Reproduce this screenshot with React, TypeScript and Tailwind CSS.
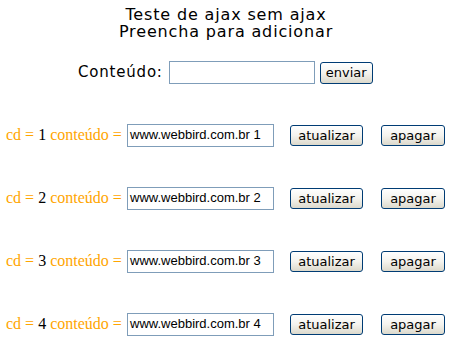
import React from "react";

const Btn = ({ children, w, h = "h-[21px]" }: { children: React.ReactNode; w: string; h?: string }) => (
  <button
    className={`${w} ${h} rounded-[3px] border border-[#003c74] bg-gradient-to-b from-[#ffffff] via-[#f4f3ee] to-[#dcd9cc] text-[13px] leading-none text-black [font-family:'DejaVu_Sans',Verdana,sans-serif] flex items-center justify-center`}
  >
    {children}
  </button>
);

const Row = ({ n }: { n: number }) => (
  <div className="flex items-center h-[24px]">
    <div className="w-[127px] pl-[6px] text-[16px] text-[#ffa500] [font-family:'Liberation_Serif','Times_New_Roman',serif] whitespace-nowrap">
      cd = <span className="text-black">{n}</span> conteúdo =
    </div>
    <div className="w-[147px] h-[23px] border border-[#7f9db9] bg-white flex items-center pl-[2px] text-[13px] text-black [font-family:'Liberation_Sans',Arial,sans-serif] whitespace-nowrap">
      www.webbird.com.br {n}
    </div>
    <div className="ml-[16px]">
      <Btn w="w-[73px]">atualizar</Btn>
    </div>
    <div className="ml-[18px]">
      <Btn w="w-[64px]">apagar</Btn>
    </div>
  </div>
);

export default function App() {
  return (
    <div className="w-[466px] h-[344px] bg-white overflow-hidden">
      <div className="pt-[6px] text-center text-[16px] leading-[17px] tracking-[0.85px] text-black [font-family:'DejaVu_Sans',Verdana,sans-serif] pr-[14px]">
        <div>Teste de ajax sem ajax</div>
        <div>Preencha para adicionar</div>
      </div>
      <div className="mt-[21px] flex items-center pl-[78px]">
        <span className="text-[15px] tracking-[0.8px] text-black [font-family:'DejaVu_Sans',Verdana,sans-serif]">Conteúdo:</span>
        <div className="ml-[6px] w-[146px] h-[23px] border border-[#7f9db9] bg-white" />
        <div className="ml-[5px]">
          <Btn w="w-[53px]" h="h-[22px]">enviar</Btn>
        </div>
      </div>
      <div className="mt-[39px] flex flex-col gap-[39px]">
        <Row n={1} />
        <Row n={2} />
        <Row n={3} />
        <Row n={4} />
      </div>
    </div>
  );
}
